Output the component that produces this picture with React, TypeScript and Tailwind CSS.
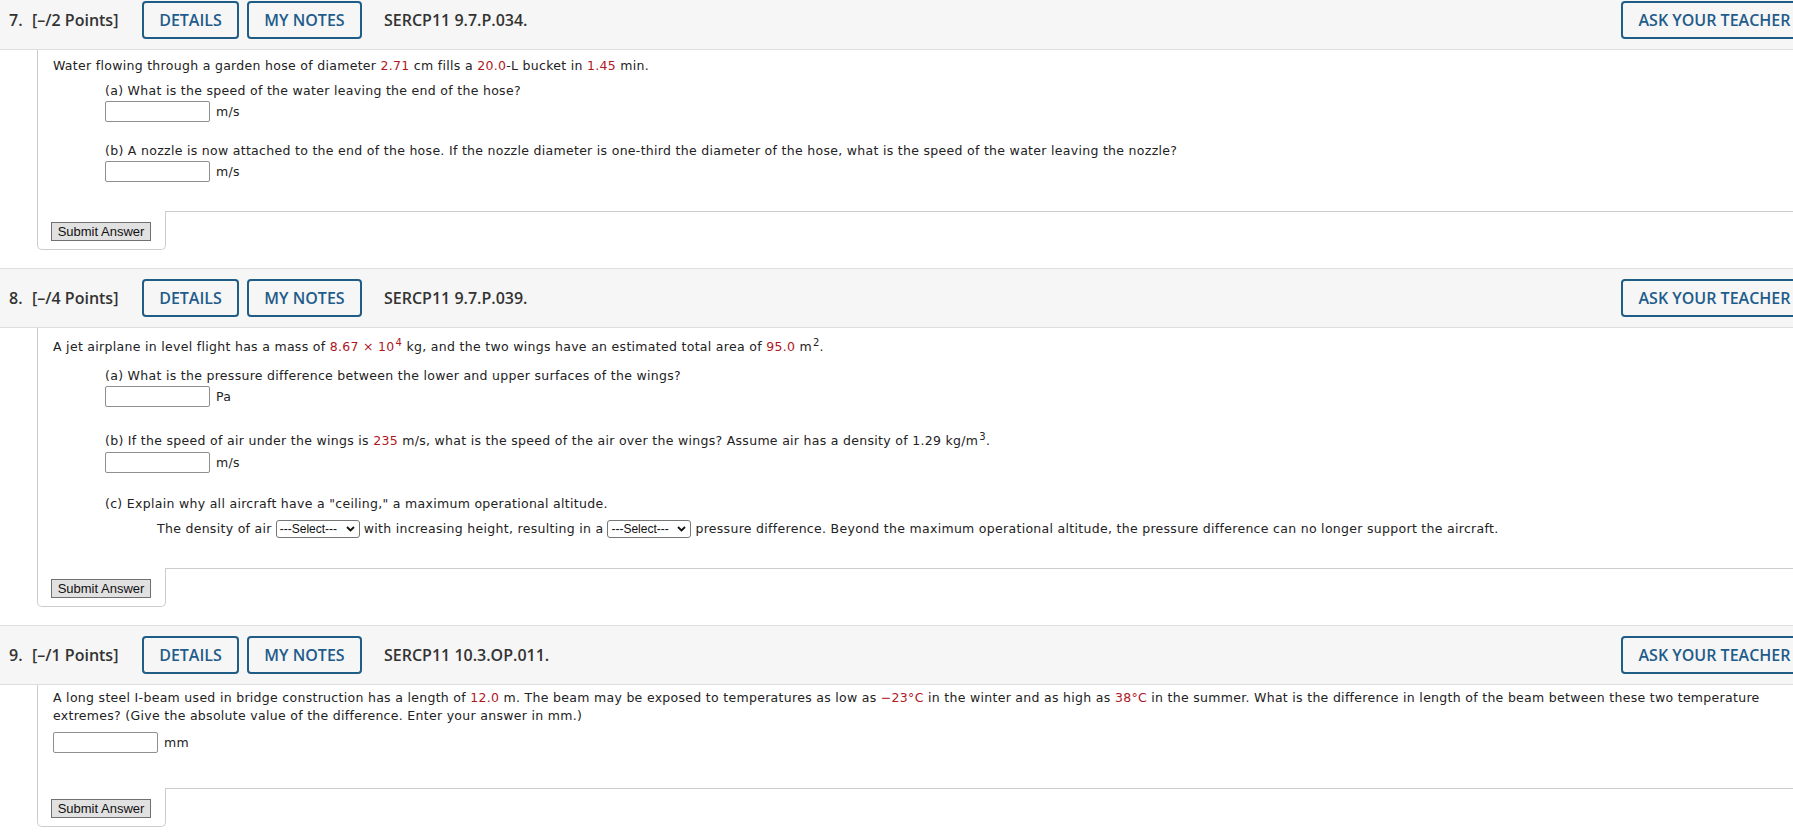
import React from 'react';

const R: React.FC<{ children: React.ReactNode }> = ({ children }) => (
  <span className="text-[#b0171f]">{children}</span>
);

const AnswerBox: React.FC<{ unit: string; className?: string }> = ({ unit, className = '' }) => (
  <div className={`flex items-center ${className}`}>
    <div className="w-[105px] h-[21px] border border-[#8f8f8f] rounded-[2px] bg-white" />
    <span className="ml-[6px]">{unit}</span>
  </div>
);

const SelectBox: React.FC = () => (
  <span className="inline-flex items-center align-middle w-[84px] h-[18px] mx-[4px] border border-[#767676] rounded-[3px] bg-white pl-[3px] pr-[4px] justify-between font-['Liberation_Sans',Arial,sans-serif] text-[12px] tracking-normal text-[#111] -mt-[2px]">
    <span>---Select---</span>
    <svg width="9" height="6" viewBox="0 0 9 6" className="shrink-0">
      <path d="M1 1 L4.5 4.5 L8 1" fill="none" stroke="#111" strokeWidth="1.8" />
    </svg>
  </span>
);

const HeaderButton: React.FC<{ label: string; width: string }> = ({ label, width }) => (
  <button
    className={`${width} h-[38px] shrink-0 border-2 border-[#1f5c86] rounded-[4px] bg-transparent text-[#1f5c8b] text-[16px] font-semibold flex items-center justify-center`}
  >
    {label}
  </button>
);

type QuestionProps = {
  num: number;
  points: string;
  code: string;
  first?: boolean;
  contentClass: string;
  children: React.ReactNode;
};

const Question: React.FC<QuestionProps> = ({ num, points, code, first, contentClass, children }) => (
  <section className={first ? '-mt-[10px]' : 'mt-[18px]'}>
    {/* header bar */}
    <div className="h-[60px] bg-[#f6f6f6] border-y border-[#dedede] flex items-center pl-[9px] font-['Open_Sans',sans-serif] text-[#333]">
      <div className="w-[133px] shrink-0 flex font-semibold text-[16px]">
        <span className="w-[23px]">{num}.</span>
        <span>{points}</span>
      </div>
      <div className="flex gap-[8px]">
        <HeaderButton label="DETAILS" width="w-[97px]" />
        <HeaderButton label="MY NOTES" width="w-[115px]" />
      </div>
      <span className="ml-[22px] font-semibold text-[16px]">{code}</span>
      <button className="ml-auto -mr-[15px] w-[187px] h-[38px] shrink-0 border-2 border-[#1f5c86] rounded-[4px] text-[#1f5c8b] text-[16px] font-semibold flex items-center justify-center">
        ASK YOUR TEACHER
      </button>
    </div>

    {/* question body */}
    <div className="ml-[37px] font-['DejaVu_Sans',Verdana,sans-serif] text-[12.5px] tracking-[0.3px] leading-[18px] text-[#222]">
      <div className={`border-l border-[#cccccc] pl-[15px] ${contentClass}`}>{children}</div>
      <div className="flex">
        <div className="w-[129px] shrink-0 border-l border-b border-r border-[#cccccc] rounded-b-[5px] pl-[13px] pt-[11px] pb-[8px]">
          <button className="w-[100px] h-[19px] bg-[#e1e1e1] border border-[#707070] text-[13px] tracking-normal leading-none text-[#111] font-['Liberation_Sans',Arial,sans-serif] flex items-center justify-center">
            Submit Answer
          </button>
        </div>
        <div className="flex-1 border-t border-[#cccccc]" />
      </div>
    </div>
  </section>
);

export default function App() {
  return (
    <div className="w-full overflow-hidden bg-white">
      <Question num={7} points="[–/2 Points]" code="SERCP11 9.7.P.034." first contentClass="pt-[7px] pb-[29px]">
        <p>
          Water flowing through a garden hose of diameter <R>2.71</R> cm fills a <R>20.0</R>-L bucket in <R>1.45</R> min.
        </p>
        <div className="ml-[52px]">
          <p className="mt-[7px]">(a) What is the speed of the water leaving the end of the hose?</p>
          <AnswerBox unit="m/s" className="mt-[1px]" />
          <p className="mt-[20px]">
            (b) A nozzle is now attached to the end of the hose. If the nozzle diameter is one-third the diameter of the hose, what is the speed of the water leaving the nozzle?
          </p>
          <AnswerBox unit="m/s" className="mt-[1px]" />
        </div>
      </Question>

      <Question num={8} points="[–/4 Points]" code="SERCP11 9.7.P.039." contentClass="pt-[10px] pb-[30px]">
        <p>
          A jet airplane in level flight has a mass of <R>8.67 × 10<sup className="text-[10px] ml-[1px]">4</sup></R> kg, and the two wings have an estimated total area of <R>95.0</R> m<sup className="text-[10px] ml-[1px]">2</sup>.
        </p>
        <div className="ml-[52px]">
          <p className="mt-[11px]">(a) What is the pressure difference between the lower and upper surfaces of the wings?</p>
          <AnswerBox unit="Pa" className="mt-[1px]" />
          <p className="mt-[25px]">
            (b) If the speed of air under the wings is <R>235</R> m/s, what is the speed of the air over the wings? Assume air has a density of 1.29 kg/m<sup className="text-[10px] ml-[1px]">3</sup>.
          </p>
          <AnswerBox unit="m/s" className="mt-[2px]" />
          <p className="mt-[22px]">(c) Explain why all aircraft have a "ceiling," a maximum operational altitude.</p>
          <p className="mt-[7px] ml-[52px]">
            The density of air
            <SelectBox />
            with increasing height, resulting in a
            <SelectBox />
            pressure difference. Beyond the maximum operational altitude, the pressure difference can no longer support the aircraft.
          </p>
        </div>
      </Question>

      <Question num={9} points="[–/1 Points]" code="SERCP11 10.3.OP.011." contentClass="pt-[4px] pb-[35px]">
        <p>
          A long steel I-beam used in bridge construction has a length of <R>12.0</R> m. The beam may be exposed to temperatures as low as <R>−23°C</R> in the winter and as high as <R>38°C</R> in the summer. What is the difference in length of the beam between these two temperature extremes? (Give the absolute value of the difference. Enter your answer in mm.)
        </p>
        <AnswerBox unit="mm" className="mt-[7px]" />
      </Question>
    </div>
  );
}
